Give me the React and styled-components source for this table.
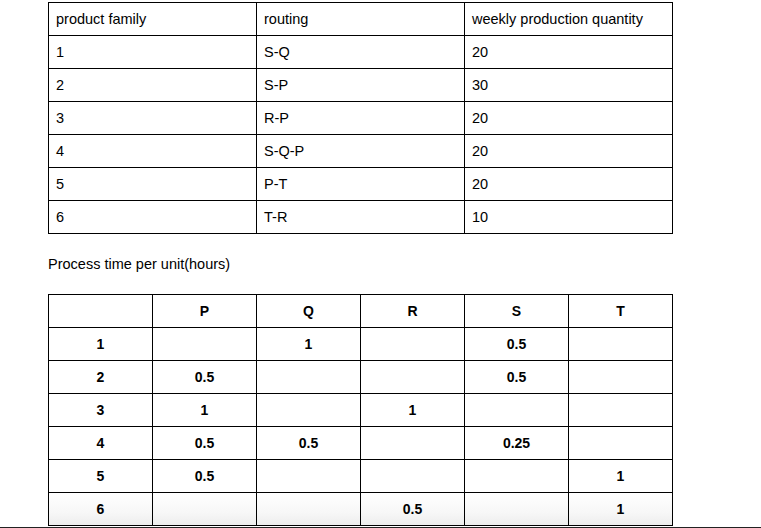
import styled, { createGlobalStyle } from "styled-components";

const GlobalStyle = createGlobalStyle`
  html, body {
    margin: 0;
    padding: 0;
    background: #fff;
  }
  body {
    font-family: "Liberation Sans", Arial, sans-serif;
    color: #000;
  }
`;

const routes = [
  ["1", "S-Q", "20"],
  ["2", "S-P", "30"],
  ["3", "R-P", "20"],
  ["4", "S-Q-P", "20"],
  ["5", "P-T", "20"],
  ["6", "T-R", "10"],
];

const machines = ["P", "Q", "R", "S", "T"];

const times = [
  ["1", "", "1", "", "0.5", ""],
  ["2", "0.5", "", "", "0.5", ""],
  ["3", "1", "", "1", "", ""],
  ["4", "0.5", "0.5", "", "0.25", ""],
  ["5", "0.5", "", "", "", "1"],
  ["6", "", "", "0.5", "", "1"],
];

const Page = styled.div`
  position: relative;
  width: 761px;
  height: 528px;
  overflow: hidden;
  padding: 2px 0 0 48px;
  box-sizing: border-box;
`;

const Table = styled.table`
  border-collapse: collapse;
  table-layout: fixed;
  width: ${(p) => p.$width}px;
`;

const Cell = styled.td`
  border: 1px solid #000;
  height: 33px;
  padding: 0 7px;
  box-sizing: border-box;
  font-size: ${(p) => (p.$bold ? "14px" : "14.5px")};
  line-height: 16px;
  font-weight: ${(p) => (p.$bold ? 700 : 400)};
  text-align: ${(p) => (p.$center ? "center" : "left")};
  white-space: nowrap;
`;

const ShadedRow = styled.tr`
  background: linear-gradient(to bottom, #fff 0%, #f7f7f7 60%, #ececec 100%);
`;

const Caption = styled.p`
  margin: 22px 0 22px;
  font-size: 14.5px;
  line-height: 16px;
`;

const BottomEdge = styled.div`
  position: absolute;
  left: 0;
  right: 0;
  bottom: 0;
  height: 1px;
  background: #222;
`;

export default function App() {
  return (
    <>
      <GlobalStyle />
      <Page>
        <Table $width={625}>
          <tbody>
            <tr>
              <Cell>product family</Cell>
              <Cell>routing</Cell>
              <Cell>weekly production quantity</Cell>
            </tr>
            {routes.map((r) => (
              <tr key={r[0]}>
                {r.map((v, i) => (
                  <Cell key={i}>{v}</Cell>
                ))}
              </tr>
            ))}
          </tbody>
        </Table>
        <Caption>Process time per unit(hours)</Caption>
        <Table $width={625}>
          <tbody>
            <tr>
              <Cell $bold $center />
              {machines.map((m) => (
                <Cell key={m} $bold $center>
                  {m}
                </Cell>
              ))}
            </tr>
            {times.map((r, idx) => {
              const Row = idx === times.length - 1 ? ShadedRow : "tr";
              return (
                <Row key={r[0]}>
                  {r.map((v, i) => (
                    <Cell key={i} $bold $center>
                      {v}
                    </Cell>
                  ))}
                </Row>
              );
            })}
          </tbody>
        </Table>
        <BottomEdge />
      </Page>
    </>
  );
}
